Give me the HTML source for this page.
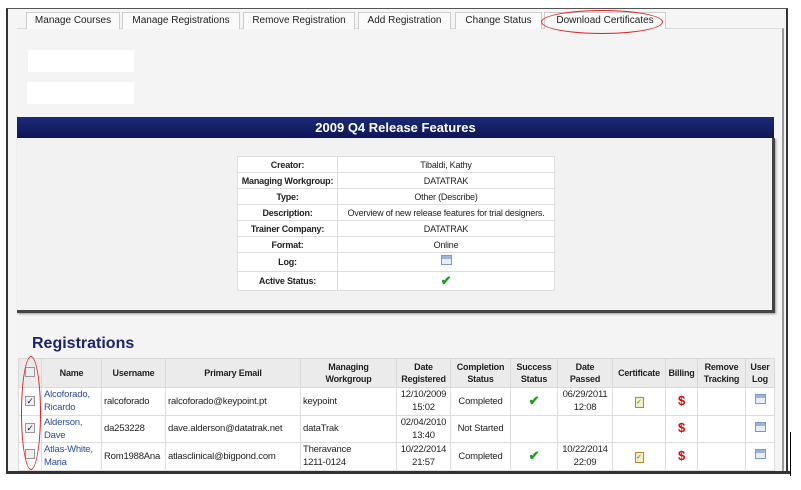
<!DOCTYPE html>
<html><head><meta charset="utf-8"><style>
*{box-sizing:border-box;margin:0;padding:0}
body{width:801px;height:490px;background:#fff;position:relative;overflow:hidden;font-family:"Liberation Sans",Arial,sans-serif;font-size:10px;color:#222}
.a{position:absolute}
#frame{left:6px;top:8px;width:782px;height:466px;border:2px solid #333;border-top:1px solid #555;background:#f5f5f5}
.tab{position:absolute;top:12px;height:17px;background:#fafafa;border:1px solid #ccc;border-bottom:none;font-size:10px;line-height:16px;text-align:center;color:#222;white-space:nowrap;overflow:hidden}
#panel{left:17px;top:28px;width:767px;height:444px;background:#f4f4f4;border-right:2px solid #999;border-top:1px solid #ddd}
.wb{background:#fff}
#bar{left:17px;top:117px;width:757px;height:21px;background:linear-gradient(#1c2a78,#0e1656);color:#fff;font-weight:bold;font-size:13px;text-align:center;line-height:21px}
#det{left:17px;top:138px;width:758px;height:175px;background:#f2f2f2;border-right:3px solid #444;border-bottom:3px solid #444;box-shadow:1px 1px 2px #999}
table{border-collapse:collapse;position:absolute;table-layout:fixed}
td,th{white-space:nowrap;overflow:hidden}
#dt{left:237px;top:156px;width:318px;background:#fff}
#dt td{border:1px solid #ddd;text-align:center;font-size:9px;height:16px;line-height:14px;padding:0 1px;letter-spacing:-0.2px}
#dt td:first-child{font-weight:bold;width:100px}
#rt{left:18px;top:358px;width:756px;background:#fff}
#rt th{background:#ebebeb;border:1px solid #d8d8d8;font-size:9px;height:29px;font-weight:bold;line-height:12px;letter-spacing:-0.2px}
#rt td{border:1px solid #ddd;height:27.5px;font-size:9.5px;line-height:13px;padding:0 2px;letter-spacing:-0.2px}
.c{text-align:center}
.lk{color:#2a4a9a}
.cb{display:inline-block;width:10px;height:10px;border:1px solid #999;background:#eee;font-size:9px;line-height:9px;color:#226;text-align:center}
.chk{color:#1aa01a;font-weight:bold;font-size:13px}
.dol{color:#e00;font-weight:bold;font-size:13px}
.log{display:inline-block;width:11px;height:10px;border:1px solid #7a9ac8;background:linear-gradient(#9ab4e0 0 3px,#e8eef8 3px)}
.cert{display:inline-block;width:9px;height:11px;border:1px solid #b08a30;background:#f6eec8;font-size:7px;color:#1a1;line-height:9px;text-align:center}
</style></head><body>
<div class="a" id="frame"></div>
<div class="a" id="panel"></div>
<div class="tab" style="left:26px;width:94px">Manage Courses</div>
<div class="tab" style="left:122px;width:118px">Manage Registrations</div>
<div class="tab" style="left:243px;width:112px">Remove Registration</div>
<div class="tab" style="left:358px;width:93px">Add Registration</div>
<div class="tab" style="left:455px;width:87px">Change Status</div>
<div class="tab" style="left:544px;width:122px">Download Certificates</div>
<div class="a" style="left:541px;top:10px;width:122px;height:24px;border:1.5px solid #d22;border-radius:50%"></div>
<div class="a wb" style="left:28px;top:50px;width:106px;height:22px"></div>
<div class="a wb" style="left:27px;top:82px;width:107px;height:22px"></div>
<div class="a" id="det"></div>
<div class="a" id="bar">2009 Q4 Release Features</div>
<table id="dt">
<tr><td>Creator:</td><td>Tibaldi, Kathy</td></tr>
<tr><td>Managing Workgroup:</td><td>DATATRAK</td></tr>
<tr><td>Type:</td><td>Other (Describe)</td></tr>
<tr><td>Description:</td><td>Overview of new release features for trial designers.</td></tr>
<tr><td>Trainer Company:</td><td>DATATRAK</td></tr>
<tr><td>Format:</td><td>Online</td></tr>
<tr><td style="height:19px">Log:</td><td><span class="log"></span></td></tr>
<tr><td style="height:19px">Active Status:</td><td><span class="chk">✔</span></td></tr>
</table>
<div class="a" style="left:32px;top:335px;font-size:16px;font-weight:bold;color:#1a2470">Registrations</div>
<table id="rt">
<colgroup><col style="width:23px"><col style="width:60px"><col style="width:64px"><col style="width:135px"><col style="width:96px"><col style="width:54px"><col style="width:60px"><col style="width:47px"><col style="width:55px"><col style="width:53px"><col style="width:32px"><col style="width:48px"><col style="width:29px"></colgroup>
<tr><th><span class="cb"></span></th><th>Name</th><th>Username</th><th>Primary Email</th><th>Managing<br>Workgroup</th><th>Date<br>Registered</th><th>Completion<br>Status</th><th>Success<br>Status</th><th>Date<br>Passed</th><th>Certificate</th><th>Billing</th><th>Remove<br>Tracking</th><th>User<br>Log</th></tr>
<tr><td class="c"><span class="cb">✓</span></td><td class="lk">Alcoforado,<br>Ricardo</td><td>ralcoforado</td><td>ralcoforado@keypoint.pt</td><td>keypoint</td><td class="c">12/10/2009<br>15:02</td><td class="c">Completed</td><td class="c"><span class="chk">✔</span></td><td class="c">06/29/2011<br>12:08</td><td class="c"><span class="cert">✓</span></td><td class="c"><span class="dol">$</span></td><td></td><td class="c"><span class="log"></span></td></tr>
<tr><td class="c"><span class="cb">✓</span></td><td class="lk">Alderson,<br>Dave</td><td>da253228</td><td>dave.alderson@datatrak.net</td><td>dataTrak</td><td class="c">02/04/2010<br>13:40</td><td class="c">Not Started</td><td></td><td></td><td></td><td class="c"><span class="dol">$</span></td><td></td><td class="c"><span class="log"></span></td></tr>
<tr><td class="c"><span class="cb"></span></td><td class="lk">Atlas-White,<br>Maria</td><td>Rom1988Ana</td><td>atlasclinical@bigpond.com</td><td>Theravance<br>1211-0124</td><td class="c">10/22/2014<br>21:57</td><td class="c">Completed</td><td class="c"><span class="chk">✔</span></td><td class="c">10/22/2014<br>22:09</td><td class="c"><span class="cert">✓</span></td><td class="c"><span class="dol">$</span></td><td></td><td class="c"><span class="log"></span></td></tr>
</table>
<div class="a" style="left:6px;top:471px;width:784px;height:19px;background:#fff;border-top:3px solid #333"></div>
<div class="a" style="left:21px;top:356px;width:20px;height:38px;border:0"></div>
<div class="a" style="left:21px;top:356px;width:20px;height:114px;border:1.5px solid #d22;border-radius:50%"></div>
<div class="a" style="left:790px;top:432px;width:1px;height:44px;background:#000"></div>
</body></html>
